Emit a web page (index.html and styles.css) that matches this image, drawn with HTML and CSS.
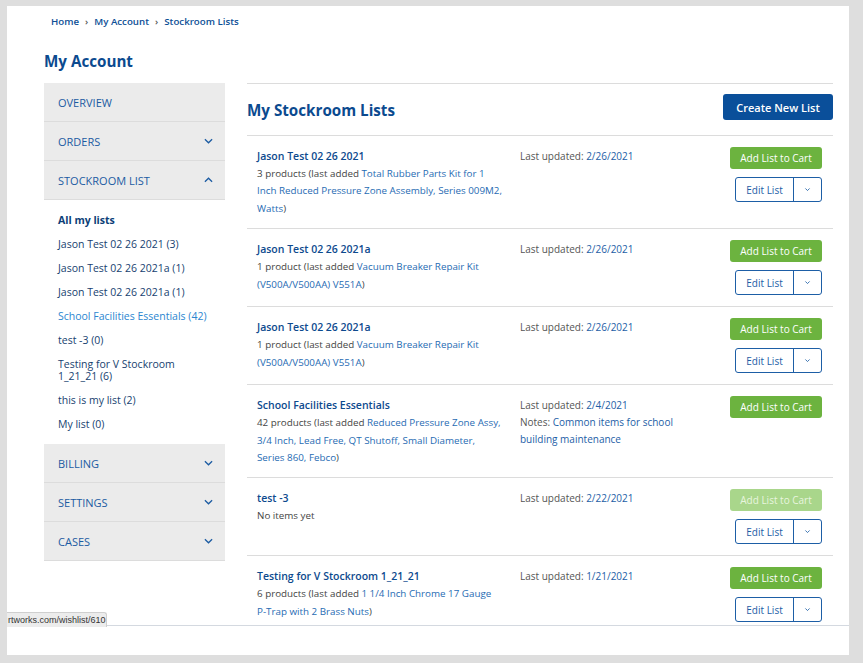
FILE: index.html
```html
<!DOCTYPE html>
<html lang="en">
<head>
    <meta charset="UTF-8">
    <title>My Stockroom Lists</title>
    <link rel="stylesheet" href="styles.css">
</head>
<body>
    <div class="frame">
        <div class="page">
            <nav class="crumbs">
                <a href="#">Home</a><span class="sep">&rsaquo;</span><a href="#">My Account</a><span class="sep">&rsaquo;</span><a href="#">Stockroom Lists</a>
            </nav>
            <h1 class="page-title">My Account</h1>

            <div class="layout">
                <aside class="side">
                    <div class="side-item">OVERVIEW</div>
                    <div class="side-item">ORDERS
                        <svg class="chev" viewBox="0 0 10 6"><path d="M1 1l4 4 4-4"/></svg>
                    </div>
                    <div class="side-item">STOCKROOM LIST
                        <svg class="chev" viewBox="0 0 10 6"><path d="M1 5l4-4 4 4"/></svg>
                    </div>
                    <ul class="sublist">
                        <li class="current">All my lists</li>
                        <li>Jason Test 02 26 2021 (3)</li>
                        <li>Jason Test 02 26 2021a (1)</li>
                        <li>Jason Test 02 26 2021a (1)</li>
                        <li class="hover">School Facilities Essentials (42)</li>
                        <li>test -3 (0)</li>
                        <li>Testing for V Stockroom 1_21_21 (6)</li>
                        <li>this is my list (2)</li>
                        <li>My list (0)</li>
                    </ul>
                    <div class="side-item">BILLING
                        <svg class="chev" viewBox="0 0 10 6"><path d="M1 1l4 4 4-4"/></svg>
                    </div>
                    <div class="side-item">SETTINGS
                        <svg class="chev" viewBox="0 0 10 6"><path d="M1 1l4 4 4-4"/></svg>
                    </div>
                    <div class="side-item">CASES
                        <svg class="chev" viewBox="0 0 10 6"><path d="M1 1l4 4 4-4"/></svg>
                    </div>
                </aside>

                <main class="main">
                    <div class="main-head">
                        <h2>My Stockroom Lists</h2>
                        <button class="btn-create">Create New List</button>
                    </div>

                    <div class="row">
                        <div class="info">
                            <div class="name">Jason Test 02 26 2021</div>
                            <div class="desc">3 products (last added <a href="#">Total Rubber Parts Kit for 1 Inch Reduced Pressure Zone Assembly, Series 009M2, Watts</a>)</div>
                        </div>
                        <div class="meta">Last updated: <span class="val">2/26/2021</span></div>
                        <div class="actions">
                            <button class="btn-cart">Add List to Cart</button>
                            <div class="split"><span class="edit">Edit List</span><span class="drop"><svg viewBox="0 0 10 6"><path d="M2 1.5l3 3 3-3"/></svg></span></div>
                        </div>
                    </div>

                    <div class="row">
                        <div class="info">
                            <div class="name">Jason Test 02 26 2021a</div>
                            <div class="desc">1 product (last added <a href="#">Vacuum Breaker Repair Kit (V500A/V500AA) V551A</a>)</div>
                        </div>
                        <div class="meta">Last updated: <span class="val">2/26/2021</span></div>
                        <div class="actions">
                            <button class="btn-cart">Add List to Cart</button>
                            <div class="split"><span class="edit">Edit List</span><span class="drop"><svg viewBox="0 0 10 6"><path d="M2 1.5l3 3 3-3"/></svg></span></div>
                        </div>
                    </div>

                    <div class="row">
                        <div class="info">
                            <div class="name">Jason Test 02 26 2021a</div>
                            <div class="desc">1 product (last added <a href="#">Vacuum Breaker Repair Kit (V500A/V500AA) V551A</a>)</div>
                        </div>
                        <div class="meta">Last updated: <span class="val">2/26/2021</span></div>
                        <div class="actions">
                            <button class="btn-cart">Add List to Cart</button>
                            <div class="split"><span class="edit">Edit List</span><span class="drop"><svg viewBox="0 0 10 6"><path d="M2 1.5l3 3 3-3"/></svg></span></div>
                        </div>
                    </div>

                    <div class="row">
                        <div class="info">
                            <div class="name">School Facilities Essentials</div>
                            <div class="desc">42 products (last added <a href="#">Reduced Pressure Zone Assy, 3/4 Inch, Lead Free, QT Shutoff, Small Diameter,<br>Series 860, Febco</a>)</div>
                        </div>
                        <div class="meta">Last updated: <span class="val">2/4/2021</span><br>Notes: <span class="val">Common items for school building maintenance</span></div>
                        <div class="actions">
                            <button class="btn-cart">Add List to Cart</button>
                        </div>
                    </div>

                    <div class="row">
                        <div class="info">
                            <div class="name">test -3</div>
                            <div class="desc">No items yet</div>
                        </div>
                        <div class="meta">Last updated: <span class="val">2/22/2021</span></div>
                        <div class="actions">
                            <button class="btn-cart" disabled>Add List to Cart</button>
                            <div class="split"><span class="edit">Edit List</span><span class="drop"><svg viewBox="0 0 10 6"><path d="M2 1.5l3 3 3-3"/></svg></span></div>
                        </div>
                    </div>

                    <div class="row">
                        <div class="info">
                            <div class="name">Testing for V Stockroom 1_21_21</div>
                            <div class="desc">6 products (last added <a href="#">1 1/4 Inch Chrome 17 Gauge<br>P-Trap with 2 Brass Nuts</a>)</div>
                        </div>
                        <div class="meta">Last updated: <span class="val">1/21/2021</span></div>
                        <div class="actions">
                            <button class="btn-cart">Add List to Cart</button>
                            <div class="split"><span class="edit">Edit List</span><span class="drop"><svg viewBox="0 0 10 6"><path d="M2 1.5l3 3 3-3"/></svg></span></div>
                        </div>
                    </div>
                </main>
            </div>
        </div>
        <div class="status">rtworks.com/wishlist/610</div>
    </div>
</body>
</html>
```

FILE: styles.css
```css
* {
    box-sizing: border-box;
}

body {
    margin: 0;
    background: #dedede;
    font-family: "Open Sans", "Liberation Sans", sans-serif;
    color: #444;
}

.frame {
    position: relative;
    margin: 6px 14px 0 7px;
    height: 649px;
    background: #fff;
    overflow: hidden;
}

/* visible part of the page, cut off at the bottom */
.page {
    height: 620px;
    overflow: hidden;
    border-bottom: 1px solid #d4d9e0;
    padding: 9px 16px 0 37px;
}

a {
    color: #1f6bb3;
    text-decoration: none;
}

.crumbs {
    padding-left: 7px;
    font-size: 9.7px;
    font-weight: 600;
    line-height: 14px;
}

.crumbs a {
    color: #0d4f96;
}

.crumbs .sep {
    color: #555;
    margin: 0 6px;
}

.page-title {
    margin: 23px 0 0;
    font-size: 15.2px;
    line-height: 18px;
    font-weight: 700;
    color: #0b4a8f;
}

.layout {
    display: flex;
    gap: 22px;
    margin-top: 13px;
}

/* sidebar */
.side {
    width: 181px;
    flex-shrink: 0;
}

.side-item {
    display: flex;
    align-items: center;
    justify-content: space-between;
    height: 39px;
    padding: 0 12px 0 14px;
    background: #ebebeb;
    border-bottom: 1px solid #dcdcdc;
    color: #1b5ba2;
    font-size: 11px;
}

.chev {
    width: 9px;
    height: 6px;
    fill: none;
    stroke: #1b5ba2;
    stroke-width: 1.4;
}

.sublist {
    list-style: none;
    margin: 0;
    padding: 8px 14px 8px 14px;
}

.sublist li {
    padding: 6px 0;
    font-size: 10.5px;
    line-height: 12px;
    color: #173f70;
}

.sublist li.current {
    font-weight: 700;
    color: #0d3f78;
}

.sublist li.hover {
    color: #2b86d0;
}

/* main column */
.main {
    flex: 1;
    border-top: 1px solid #dcdcdc;
}

.main-head {
    display: flex;
    justify-content: space-between;
    align-items: center;
    padding: 10px 0 15px;
    border-bottom: 1px solid #dcdcdc;
}

.main-head h2 {
    margin: 6px 0 0;
    font-size: 15.2px;
    line-height: 20px;
    font-weight: 700;
    color: #0b4a8f;
}

button {
    font-family: inherit;
    cursor: pointer;
}

.btn-create {
    height: 26px;
    width: 110px;
    border: none;
    border-radius: 3px;
    background: #0a4f9a;
    color: #fff;
    font-size: 11px;
    font-weight: 600;
}

.row {
    display: flex;
    padding: 11px 11px 11px 10px;
    border-bottom: 1px solid #dcdcdc;
}

.info {
    width: 245px;
}

.name {
    font-size: 10.5px;
    font-weight: 600;
    line-height: 18px;
    color: #0d4a8e;
}

.desc {
    font-size: 9.8px;
    line-height: 17.4px;
    color: #444;
}

.meta {
    margin-left: 18px;
    width: 185px;
    padding-top: 1px;
    font-size: 10px;
    line-height: 17px;
    color: #555;
}

.meta .val {
    color: #1d5ea6;
}

.actions {
    margin-left: auto;
    display: flex;
    flex-direction: column;
    align-items: flex-end;
    gap: 8px;
}

.btn-cart {
    width: 92px;
    height: 22px;
    border: none;
    border-radius: 3px;
    background: #6cb33f;
    color: #fff;
    font-size: 10px;
}

.btn-cart:disabled {
    background: #a9d68b;
    color: #e8f5df;
    cursor: default;
}

.split {
    display: flex;
    width: 87px;
    height: 25px;
    border: 1px solid #1d5ea6;
    border-radius: 3px;
    color: #1d5ea6;
    font-size: 10px;
}

.split .edit {
    width: 58px;
    display: flex;
    align-items: center;
    justify-content: center;
    border-right: 1px solid #1d5ea6;
}

.split .drop {
    flex: 1;
    display: flex;
    align-items: center;
    justify-content: center;
}

.split svg {
    width: 7px;
    height: 5px;
    fill: none;
    stroke: #1d5ea6;
    stroke-width: 1.2;
}

/* browser status bubble */
.status {
    position: absolute;
    left: 0;
    top: 606px;
    width: 100px;
    height: 15px;
    padding-left: 1px;
    background: #ececec;
    border: 1px solid #cfcfcf;
    border-left: none;
    border-bottom: none;
    border-top-right-radius: 3px;
    font-family: "Liberation Sans", sans-serif;
    font-size: 9px;
    line-height: 14px;
    color: #333;
    white-space: nowrap;
    overflow: hidden;
}
```
